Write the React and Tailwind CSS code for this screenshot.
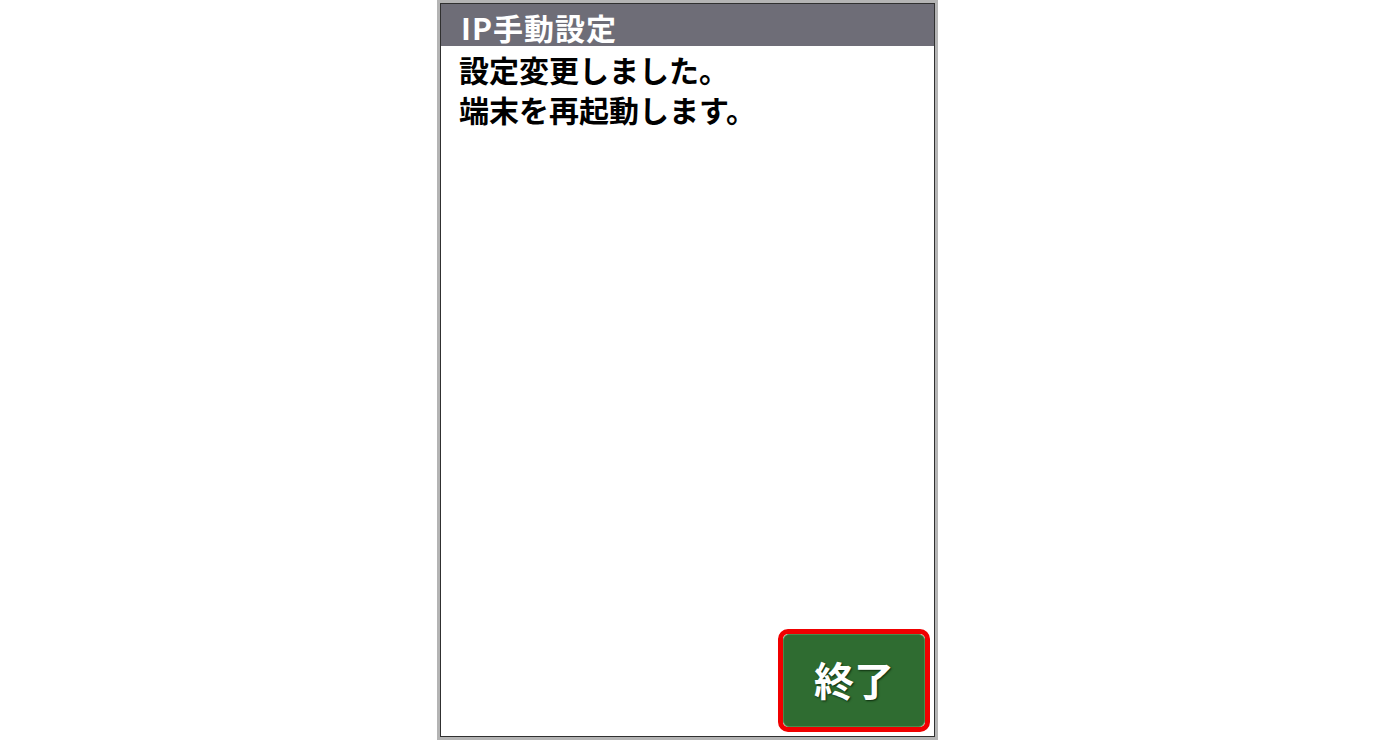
export default function App() {
  const font = { fontFamily: '"Noto Sans CJK JP", "Noto Sans", sans-serif' }
  return (
    <div className="flex h-[740px] w-[1376px] justify-center bg-white" style={font}>
      <div className="ml-[-1px] flex h-[740px] w-[501px] flex-col border-[3px] border-[#b4b4b4]">
        <div className="flex flex-1 flex-col border-[1.5px] border-[#303030] bg-white">
          {/* Title bar */}
          <div className="flex h-[42px] items-center bg-[#6e6d77] pt-[3px] pl-[20px]">
            <span className="text-[30px] leading-none font-bold tracking-[1px] text-white">IP手動設定</span>
          </div>

          {/* Message */}
          <div className="flex flex-1 flex-col px-[18px] pt-[3px]">
            <p className="text-[30px] leading-[40px] font-bold text-black">設定変更しました。</p>
            <p className="text-[30px] leading-[40px] font-bold text-black">端末を再起動します。</p>

            <div className="mt-auto mr-[-14px] mb-[4px] flex justify-end">
              <div className="rounded-[10px] border-[5px] border-[#f00000]">
                <button className="flex h-[93px] w-[142px] items-center justify-center rounded-[6px] border border-[#4a8a4c] bg-[#2f6c31] pb-[4px] text-[40px] font-bold text-white [text-shadow:1px_1px_2px_#0b2a0c]">
                  終了
                </button>
              </div>
            </div>
          </div>
        </div>
      </div>
    </div>
  )
}
